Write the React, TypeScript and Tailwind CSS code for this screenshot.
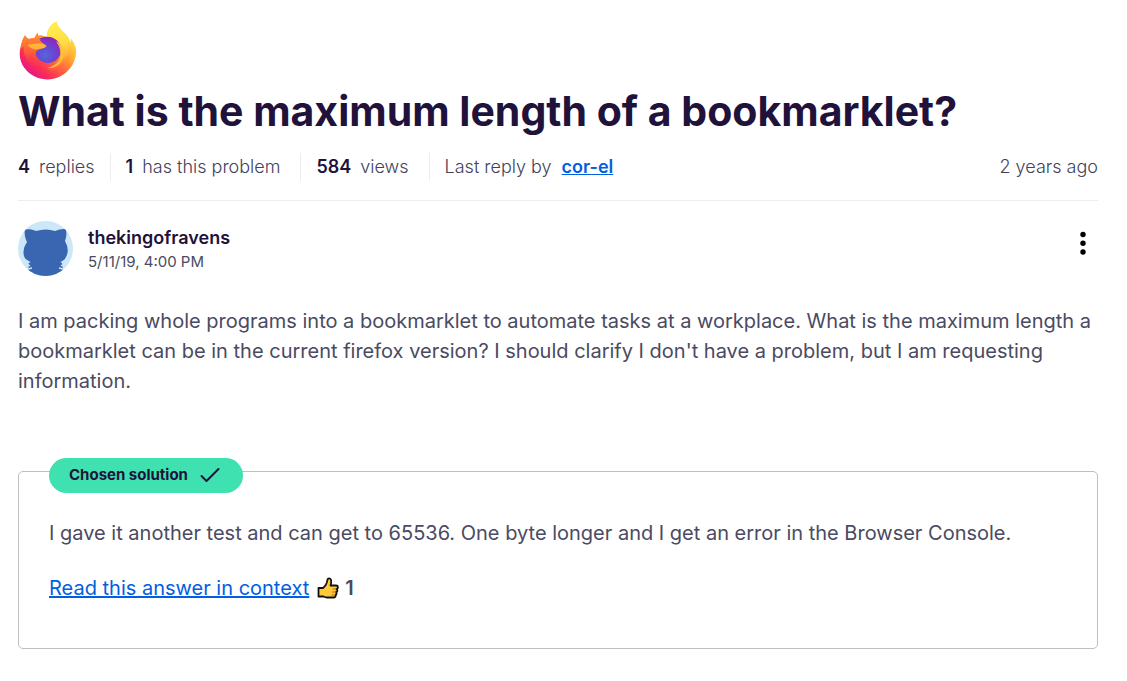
import type { ReactNode } from "react";

function FirefoxLogo() {
  return (
    <svg viewBox="0 0 76 72" className="h-[72px] w-[76px]" role="img" aria-label="Firefox">
      <defs>
        <linearGradient id="body" x1="0.9" y1="0.15" x2="0.2" y2="0.95">
          <stop offset="0.05" stopColor="#ffe14a" />
          <stop offset="0.3" stopColor="#ffb62e" />
          <stop offset="0.55" stopColor="#ff6a3a" />
          <stop offset="0.8" stopColor="#fa2d55" />
          <stop offset="1" stopColor="#e5158a" />
        </linearGradient>
        <linearGradient id="flame" x1="0.3" y1="0" x2="0.5" y2="1">
          <stop offset="0" stopColor="#fff04f" />
          <stop offset="0.5" stopColor="#ffdc43" />
          <stop offset="0.75" stopColor="#ffb038" />
          <stop offset="1" stopColor="#ff5a44" stopOpacity="0" />
        </linearGradient>
        <radialGradient id="globe" cx="0.4" cy="0.7" r="0.75">
          <stop offset="0" stopColor="#5566dc" />
          <stop offset="0.5" stopColor="#6c43d2" />
          <stop offset="1" stopColor="#9427bd" />
        </radialGradient>
        <linearGradient id="head" x1="0" y1="0" x2="0" y2="1">
          <stop offset="0" stopColor="#ff9430" />
          <stop offset="0.5" stopColor="#ff6238" />
          <stop offset="1" stopColor="#fb3852" stopOpacity="0" />
        </linearGradient>
      </defs>
      <path d="M15 21.500C16 23 17.500 24.500 19 25C21 24.500 23 24 24.500 24C26 21 30 20 37 23C37 15 41 10 46.700 7.500C47 14 55 18 58.500 24C59.500 25.500 60 27 60.500 29L61 24.500C63 27 65 31 66 35C67 47 60 58 49 63C38 68 25 65 17 57C9 49 8 38 12 29C12.500 26 13.500 23.500 15 21.500Z" fill="url(#body)" />
      <path d="M37 23C37 15 41 10 46.700 7.500C47 14 55 18 58.500 24C63 33 62 45 55 52C50 57 43 58 37 56C46 55 51 49 51.500 40C52 31 45 25 37 23Z" fill="url(#flame)" />
      <circle cx="38" cy="36" r="13" fill="url(#globe)" />
      <path d="M28.500 25.500C34 21 43 22 48 28C50 30 51 33 51 37C49.500 34 48 31 45.500 29C40 25 34 25 28.500 25.500Z" fill="#8f27b8" />
      <path d="M46 27.500C52 29 55.500 36 53.500 43C51 51 44 55 37 54C46 52 51 46 50.500 40C50 34 49 32 46 27.500Z" fill="#ffc03c" fillOpacity=".9" />
      <path d="M15 21.500C16 23 17.500 24.500 19 25C21.500 24 23 24 24.500 24C25.500 21.500 26.500 19.500 28 18.500C28 21 28 23 29.500 25.500C31 28 34 30 36.500 32C35 34.500 31 34.500 28 35.500C25.500 38 25 41 26.500 44C29 49 35 51 41 49C36 56 26 56 19.500 49C15 44 13 39 14 33C12.500 33 11.500 34 10.500 36C10.500 31 12 25.500 15 21.500Z" fill="url(#head)" />
      <path d="M17 31C20 29.500 24 30 26 29.500C30 28.500 34 29.500 36.500 32C35 34.500 31 34.500 28 35.500C24 36 20 34 17 31Z" fill="#ffb239" />
    </svg>
  );
}

function Avatar() {
  return (
    <svg viewBox="0 0 55 55" className="size-[55px] shrink-0" role="img" aria-label="thekingofravens">
      <defs>
        <clipPath id="round">
          <circle cx="27.500" cy="27.500" r="27.500" />
        </clipPath>
      </defs>
      <g clipPath="url(#round)">
        <path d="M0 0H55V55H0Z" fill="#cce8f8" />
        <path d="M7 9C8 8 14 8 18 10Q28 7 37 10C42 8 47 7 48 9C49 13 48 17 47 20Q52 29 48 36Q46 40 44 42L45 50L40 55H15L10 50L11 43Q7 39 6 35Q4 28 9 21C7 17 6 12 7 9Z" fill="#3a65b0" />
        <path d="M6 38L11 41L8 42L12 45M49 38L44 41L47 42L43 45M10 48L14 47M45 48L41 47" fill="none" stroke="#cce8f8" strokeWidth="1.500" />
      </g>
    </svg>
  );
}

function ThumbsUp() {
  return (
    <svg viewBox="0 0 22 22" className="size-[22px]" role="img" aria-label="Thumbs up">
      <path d="M1.500 11H6C8.500 9 10 7 10.500 2.500C11 1 13.500 1 14 3C14.500 5 14 7 13.500 8.500H19C21.500 8.500 21.500 11.500 19.500 12C21 13 20.500 15 19 15C20 16 19.500 17.500 18.500 18C19 19.500 18 20.500 16.500 20.500H10C8.500 20.500 7.500 20 6.500 19.500H1.500Z" fill="#ffc83d" stroke="#111" strokeWidth="1.800" strokeLinejoin="round" />
      <path d="M15.500 12H19M15 15H19M14.500 18H18" stroke="#bd7410" strokeWidth="1.100" />
    </svg>
  );
}

function Stat({ value, children }: { value: string; children: ReactNode }) {
  return (
    <li className="mr-[15px] flex gap-[9px] border-r border-[#ededf0] pr-[15px] nth-2:pr-5 nth-3:pr-5">
      <strong className="font-semibold text-[#20123a]">{value}</strong>
      <span>{children}</span>
    </li>
  );
}

export default function App() {
  return (
    <main className="bg-white pt-[14px] pr-[29px] pb-8 pl-[18px] font-['Inter',sans-serif] text-lg text-[#4a4a62]">
      <header>
        <div className="-ml-2">
          <FirefoxLogo />
        </div>
        <h1 className="text-[41px] leading-[50px] font-bold text-[#20123a]">
          What is the maximum length of a bookmarklet?
        </h1>
        <div className="mt-[17px] flex items-center justify-between border-b border-[#ededf0] pb-[19px] leading-7 font-light text-[#42425a]">
          <ul className="flex">
            <Stat value="4">replies</Stat>
            <Stat value="1">has this problem</Stat>
            <Stat value="584">views</Stat>
            <li className="flex gap-[10px]">
              Last reply by
              <a href="#cor-el" className="font-semibold text-[#0060df] underline">cor-el</a>
            </li>
          </ul>
          <time>2 years ago</time>
        </div>
      </header>

      <article>
        <div className="mt-5 flex items-center">
          <Avatar />
          <div className="mt-[2px] ml-[15px]">
            <a href="#thekingofravens" className="block leading-6 font-semibold text-[#20123a]">thekingofravens</a>
            <time className="block text-[15px] leading-6">5/11/19, 4:00 PM</time>
          </div>
          <button type="button" aria-label="More options" className="mr-[3px] mb-3 ml-auto flex h-6 w-6 items-center justify-center">
            <svg viewBox="0 0 24 24" className="size-6 shrink-0" fill="#000">
              <circle cx="12" cy="3.500" r="2.700" />
              <circle cx="12" cy="12.200" r="2.700" />
              <circle cx="12" cy="21" r="2.700" />
            </svg>
          </button>
        </div>
        <p className="mt-[30px] text-xl leading-[30px]">
          I am packing whole programs into a bookmarklet to automate tasks at a workplace. What is the maximum length a
          bookmarklet can be in the current firefox version? I should clarify I don't have a problem, but I am requesting
          information.
        </p>
      </article>

      <section className="mt-[75px] rounded-[5px] border border-[#bfbfc3] px-[30px] pb-[45px] text-xl leading-[30px]">
        <h2 className="-mt-[14px] flex h-[35px] w-[194px] items-center gap-3 rounded-full bg-[#3fe1b0] pb-px pl-5 text-[15px] font-bold text-[#20123a]">
          Chosen solution
          <svg viewBox="0 0 20 16" className="h-4 w-5" fill="none" stroke="#20123a" strokeWidth="2" strokeLinecap="round" strokeLinejoin="round">
            <path d="M1.500 9L6.500 14L18.500 2" />
          </svg>
        </h2>
        <p className="mt-[25px]">
          I gave it another test and can get to 65536. One byte longer and I get an error in the Browser Console.
        </p>
        <div className="mt-[25px] flex items-center">
          <a href="#answer" className="mr-2 text-[#0060df] underline">Read this answer in context</a>
          <ThumbsUp />
          <strong className="ml-[6px] font-semibold">1</strong>
        </div>
      </section>
    </main>
  );
}
